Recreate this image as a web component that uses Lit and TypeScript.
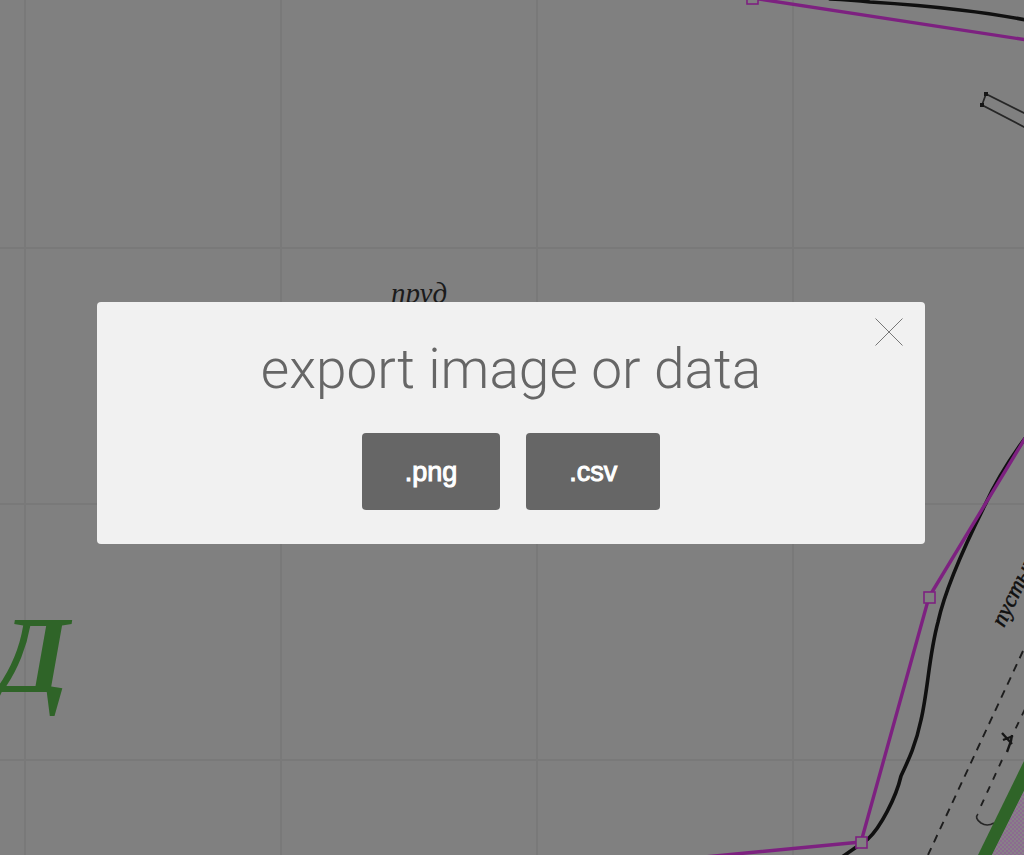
import { LitElement, html, css, svg } from "lit";
import { customElement, state } from "lit/decorators.js";

const GRID_X = [25, 281, 537, 793];
const GRID_Y = [248, 504, 760];
const NODES = [[752, -2], [929, 597], [861, 842]];

@customElement("survey-map")
class SurveyMap extends LitElement {
  static styles = css`
    :host { display: block; background: #808080; overflow: hidden; }
    .canvas { display: block; width: 100%; height: 100%; }
    .grid { stroke: #797979; stroke-width: 2; }
    .shore { fill: none; stroke: #101010; stroke-width: 3.6; stroke-linecap: round; stroke-linejoin: round; }
    .thin { fill: none; stroke: #262626; stroke-width: 1.7; }
    .tree { fill: none; stroke: #161616; stroke-width: 2.4; }
    .corner { fill: #161616; }
    .path { fill: none; stroke: #1d1d1d; stroke-width: 1.9; stroke-dasharray: 8 6.5; }
    .lane { stroke-dasharray: 7 7.5; }
    .outline { fill: none; stroke: #7d2180; stroke-width: 3.4; stroke-linejoin: round; }
    .node { fill: #808080; stroke: #7d2180; stroke-width: 1.6; }
    .label { font-family: "Liberation Serif", serif; font-style: italic; fill: #1b1b1b; }
    .place { font-size: 29px; }
    .note { font-size: 23px; fill: #101010; stroke: #101010; stroke-width: 0.5; }
    .region { font-size: 110px; font-weight: 700; fill: #2f6428; }
    .hedge { fill: #2f6428; }
    .plot { fill: url(#dots); }
  `;

  render() {
    return html`
      <svg class="canvas" viewBox="0 0 1024 855" preserveAspectRatio="xMidYMid slice" role="img" aria-label="Map">
        <defs>
          <pattern id="dots" width="4" height="4" patternUnits="userSpaceOnUse">
            <rect width="4" height="4" fill="#888088" />
            <rect width="2" height="2" fill="#8c6b90" />
            <rect x="2" y="2" width="2" height="2" fill="#8c6b90" />
          </pattern>
        </defs>
        <g class="grid">
          ${GRID_X.map((x) => svg`<line x1=${x} x2=${x} y1="0" y2="855" />`)}
          ${GRID_Y.map((y) => svg`<line y1=${y} y2=${y} x1="0" x2="1024" />`)}
        </g>
        <text class="label region" x="-6" y="693">Д</text>
        <text class="label place" x="391" y="303">пруд</text>
        <text class="label note" transform="translate(1004 628) rotate(-64)">пустыр</text>
        <path class="thin" d="M1026 114 L986 94 L982 105 L1026 128" />
        <path class="corner" d="M984 92 h4 v4 h-4 Z M980 103 h4 v4 h-4 Z" />
        <path class="shore" d="M830 -1 Q852 0 870 2 Q920 5 960 10 Q995 14 1026 20" />
        <path class="shore" d="M1026 437 Q1000 472 985 505 C965 545 945 590 938 622 C929 655 928 690 921 720 C916 744 909 759 901 776 C896 798 880 828 868 839 L842 857" />
        <path class="path" d="M1023 651 L928 855" />
        <path class="path lane" d="M1025 709 L1013 734" />
        <path class="path lane" d="M1002 760 L980 808" />
        <path class="thin" d="M978 814 Q974 818 981 823 Q987 827 994 823" />
        <path class="tree" d="M1002 733 L1012 744 M1003 740 L1013 736 M1012 735 L1011 741 L1007 752" />
        <path class="hedge" d="M1024 761 L1024 791 L992 855 L978 855 Z" />
        <path class="plot" d="M1024 791 L1024 855 L992 855 Z" />
        <path class="outline" d="M704 857 L861 842 L929 597 L1027 435" />
        <path class="outline" d="M752 -2 L1027 40" />
        ${NODES.map(([x, y]) => svg`<rect class="node" x=${x - 5} y=${y - 5} width="11" height="11" />`)}
      </svg>
    `;
  }
}

@customElement("app-root")
class AppRoot extends LitElement {
  static styles = css`
    :host { display: grid; min-height: 100vh; overflow: hidden; font-family: Roboto, sans-serif; }
    .map, .overlay { grid-area: 1 / 1; min-width: 0; }
    .map { height: 100vh; }
    .overlay { position: relative; display: grid; align-items: center; padding: 0 99px 10px 97px; }
    .dialog { position: relative; box-sizing: border-box; padding: 34px 24px; border-radius: 4px; background: #f1f1f1; text-align: center; }
    .title { margin: 0 0 30px; color: #666; font-size: 55px; line-height: 67px; font-weight: 300; }
    .actions { display: flex; flex-wrap: wrap; justify-content: center; gap: 26px; }
    .action { padding: 2px 43px 0; border: 0; border-radius: 4px; background: #666; color: #fff; font: 27px/75px "Liberation Sans", Arial, sans-serif; -webkit-text-stroke: 1px #fff; cursor: pointer; }
    .close { position: absolute; top: 14px; right: 20px; padding: 0; border: 0; background: none; cursor: pointer; }
    .cross { display: block; width: 32px; height: 32px; fill: none; stroke: #777; stroke-width: 1; }
  `;

  @state() private open = true;

  private close() {
    this.open = false;
  }

  render() {
    return html`
      <survey-map class="map"></survey-map>
      ${this.open
        ? html`<div class="overlay">
            <section class="dialog" role="dialog" aria-labelledby="title">
              <button class="close" aria-label="Close" @click=${this.close}>
                <svg class="cross" viewBox="0 0 32 32"><path d="M2.5 2.5 L29.5 29.5 M29.5 2.5 L2.5 29.5" /></svg>
              </button>
              <h1 class="title" id="title">export image or data</h1>
              <div class="actions">
                <button class="action">.png</button>
                <button class="action">.csv</button>
              </div>
            </section>
          </div>`
        : null}
    `;
  }
}
